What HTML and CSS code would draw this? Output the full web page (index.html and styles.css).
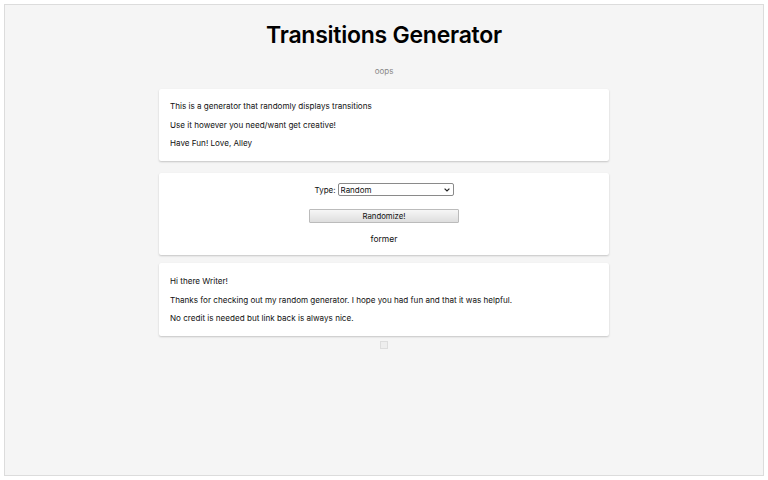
FILE: index.html
```html
<!DOCTYPE html>
<html>
<head>
<meta charset="utf-8">
<link rel="stylesheet" href="styles.css">
</head>
<body>
<div class="page">
  <h1 class="title">Transitions Generator</h1>
  <p class="oops">oops</p>
  <div class="card info first">
    <p>This is a generator that randomly displays transitions</p>
    <p>Use it however you need/want get creative!</p>
    <p>Have Fun! Love, Alley</p>
  </div>
  <div class="card gen">
    <div class="row">
      <label class="lbl">Type:</label>
      <span class="selwrap">
        <select class="sel"><option>Random</option></select>
        <svg class="chev" width="6" height="4" viewBox="0 0 6 4"><path d="M0.6 0.6 L3 3 L5.4 0.6" fill="none" stroke="#222" stroke-width="1.2"/></svg>
      </span>
    </div>
    <button class="btn">Randomize!</button>
    <div class="result">former</div>
  </div>
  <div class="card info last">
    <p>Hi there Writer!</p>
    <p>Thanks for checking out my random generator. I hope you had fun and that it was helpful.</p>
    <p>No credit is needed but link back is always nice.</p>
  </div>
  <div class="broken"><span class="img"></span></div>
</div>
</body>
</html>
```
FILE: styles.css
```css
html, body { margin: 0; padding: 0; background: #ffffff; }
body { font-family: "Inter", "Open Sans", sans-serif; color: #111; }
.page {
  margin: 4px;
  height: 472px;
  box-sizing: border-box;
  border: 1px solid #dcdcdc;
  background: #f5f5f5;
  display: flex;
  flex-direction: column;
  align-items: center;
}
.title {
  margin: 16px 0 0;
  font-size: 23px;
  font-weight: 600;
  line-height: 28px;
  letter-spacing: -0.25px;
  color: #000;
}
.oops {
  margin: 16px 0 0;
  font-size: 8px;
  line-height: 12px;
  color: #888;
}
.card {
  width: 450px;
  box-sizing: border-box;
  background: #fff;
  border-radius: 2px;
  box-shadow: 0 1px 2px rgba(0,0,0,0.2);
}
.info {
  font-size: 8.1px;
  line-height: 12px;
}
.info p { margin: 0 0 6.5px; }
.info p:last-child { margin-bottom: 0; }
.first { margin-top: 12px; padding: 11px 11px 12px; }
.last { padding: 12px 11px 12px; }
.gen {
  margin-top: 12px;
  margin-bottom: 8px;
  padding: 10px 0 10px;
  display: flex;
  flex-direction: column;
  align-items: center;
  font-size: 8px;
}
.row { display: flex; align-items: center; gap: 2px; height: 13px; }
.lbl { font-size: 8px; }
.selwrap { position: relative; display: block; height: 13px; }
.sel {
  display: block;
  width: 116px;
  height: 13px;
  box-sizing: border-box;
  font-family: inherit;
  font-size: 8px;
  padding: 0 2px;
  border: 1px solid #8a8a8a;
  border-radius: 2px;
  background: #fff;
  color: #111;
  appearance: none;
  -webkit-appearance: none;
}
.chev { position: absolute; right: 4px; top: 5px; }
.btn {
  margin-top: 13px;
  width: 150px;
  height: 14px;
  padding: 0;
  font-family: inherit;
  font-size: 7.8px;
  border: 1px solid #bbb;
  border-radius: 1px;
  background: linear-gradient(#f6f6f6, #dedede);
  color: #111;
}
.result {
  margin-top: 10px;
  font-size: 8.5px;
  line-height: 12px;
}
.broken { margin-top: 5px; }
.img {
  display: block;
  width: 6px;
  height: 6px;
  border: 1px solid #ddd;
  background: #eee;
}
```
